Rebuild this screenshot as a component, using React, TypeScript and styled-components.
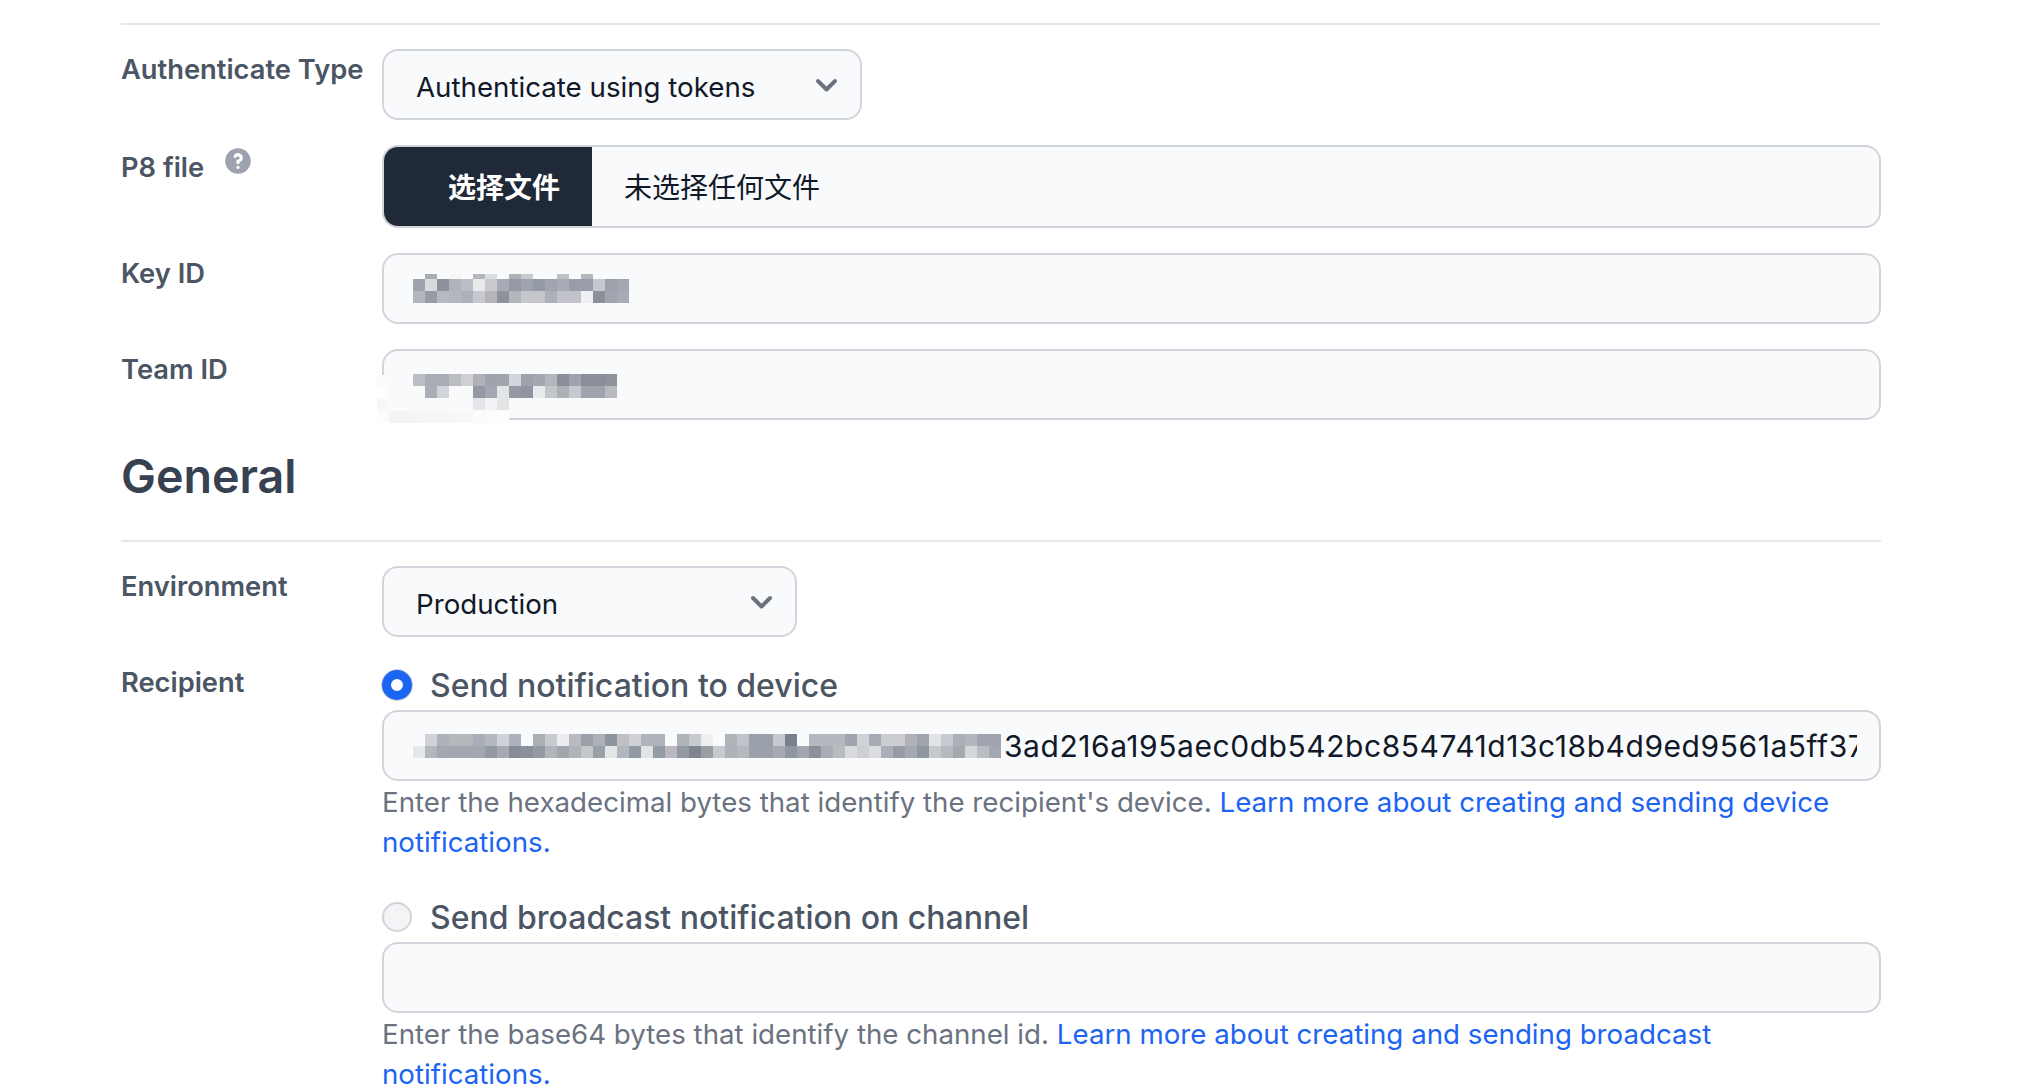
import styled, { createGlobalStyle } from "styled-components";

const GlobalStyle = createGlobalStyle`
  html, body {
    margin: 0;
    background: #fff;
    overflow: hidden;
  }
  body {
    font-family: Inter, "Noto Sans CJK SC", sans-serif;
  }
`;

const KEY_ID = [
  "- a9abb5 - f5f5f6 fbfbfc b5b7bf dcdde0 - adb1b8 c9cacf - - bfc0c7 - b5b7bf - - -",
  "a0a3ad d8dadd 8b929b b1b3bc bcbec5 e9eaec c9cacf a8abb5 959aa4 9ea3ad 959ba5 a2a5af a8abb5 9a9da9 9a9da9 c7c8cd 9ea1ac a4a6b0",
  "b4b6bd 969ca6 b7b9be b4b6bd aeb0ba c8c9ce b4b6bc 8d939d b3b6bd c6c7cc c6c7cc adb0ba c2c3ca c2c3ca eeeff1 8a909a a2a5af a8abb5",
];

const TEAM_ID = [
  "bdbec3 a9abb5 a9abb5 bcbdc2 cfd0d4 b0b2b8 9fa3ad a0a5ad d4d5da 9ca1aa a4a7af b3b6bb 8a8e99 a0a3ad 8a8e98 8a8e98 8f939c",
  "- aaacb6 d3d4d9 - - 9599a3 a3a6b0 e3e4e6 9599a3 8f95a0 e9eaec c4c6cb aeb0b8 c8c9ce a0a3ad a0a3ad b8bac0",
  "- - - - - e6e6ea f3f3f5 e3e4e6",
];

const DEVICE = [
  "- d2d3d8 adb1ba b4b7bc b4b7bc a8adb7 b4b8bd d2d3d8 adb1bb - abaeb5 c9cacf ecedef b8bac0 9aa0aa aeb0b6 8e959e bec0c5 d0d1d6 b0b3b9 aeb2bb - b0b3b9 c9cacf eeeff1 - b0b4ba c2c3c8 9aa0aa 9aa0aa c8c9ce 7b818c - b4b7bd b4b7bd b4b7bd a1a4ae d2d3d8 a8abb5 cbcdd1 cbcdd1 b0b2b8 a1a4ae e3e4e7 c8cad0 abafb8 b5b6bc a1a4ae a1a4ae",
  "e6e7e9 b4b6bd a4a7b0 a2a6ae a2a6ae a2a7b0 939aa3 a7aab3 868d98 8a919b 949aa3 b2b4bb a2a6ac b0b3b9 c6c7cb 98a0a8 e4e5e6 b2b6bf 929aa3 e2e3e7 949ca5 b8b9be 929aa2 7e858f 979ea6 c9cacd aeb1b9 b6b7bc 9aa1ab 9aa1ab a4a9b2 8f97a1 a2a6b0 8a919c a8acb4 b8bcc0 d9dadd cdcfd3 dcdde0 abaeb8 959ca6 a5a9b2 8f97a1 c6c8cc b6b9bf a4a9b0 d5d6da bcbdc2 a5a8b2",
];

// white smudge that runs over the bottom left corner of the Team ID field
const TEAM_SMUDGE = [
  "fbfbfc",
  "fefefe",
  "f7f7f8",
  "fcfcfc f4f4f6 f4f4f6 f5f5f6 f6f6f7 f6f6f7 f7f7f8 f8f8f9 fbfbfc fdfdfd fdfdfd",
];

const Page = styled.div`
  width: 1760px;
  height: 1092px;
  margin-left: 121px;
  padding-top: 23px;
  box-sizing: border-box;
  overflow: hidden;
`;

const Divider = styled.hr`
  margin: 0 0 24px;
  border: 0;
  height: 2px;
  background: #e5e7eb;
`;

const SectionTitle = styled.h2`
  margin: -4px 0 29px;
  font-size: 46.6px;
  line-height: 70px;
  font-weight: 600;
  color: #374151;
`;

const FormRow = styled.div`
  display: grid;
  grid-template-columns: 261px 1fr;
  margin-bottom: 25px;
`;

const FieldLabel = styled.label<{ $top?: number }>`
  display: flex;
  align-items: flex-start;
  padding-top: ${({ $top }) => $top ?? 2}px;
  font-size: 27.3px;
  line-height: 38px;
  font-weight: 600;
  color: #4b5563;
`;

const HelpIcon = styled.svg`
  width: 32px;
  height: 32px;
  margin: -4px 0 0 18px;
  fill: #9ca3af;
`;

const Control = styled.div`
  min-width: 0;
`;

const SelectBox = styled.div<{ $width: number }>`
  display: flex;
  align-items: center;
  justify-content: space-between;
  box-sizing: border-box;
  width: ${({ $width }) => $width}px;
  height: 71px;
  padding: 0 21px 0 32px;
  border: 2px solid #d1d5db;
  border-radius: 16px;
  background: #f9fafb;
`;

const SelectValue = styled.span`
  padding-top: 4px;
  font-size: 27.7px;
  color: #111827;
`;

const Chevron = styled.svg`
  width: 25px;
  height: 17px;
  margin-top: 1px;
  fill: none;
  stroke: #6b7280;
  stroke-width: 4;
  stroke-linecap: round;
  stroke-linejoin: round;
`;

const FileBox = styled.div`
  display: flex;
  align-items: stretch;
  box-sizing: border-box;
  height: 83px;
  border: 2px solid #d1d5db;
  border-radius: 16px;
  background: #f9fafb;
  overflow: hidden;
`;

const FileButton = styled.div`
  display: flex;
  align-items: center;
  box-sizing: border-box;
  width: 208px;
  padding: 0 0 1px 64px;
  background: #1f2937;
  color: #fff;
  font-size: 28px;
  font-weight: 600;
`;

const FileName = styled.div`
  display: flex;
  align-items: center;
  padding: 0 0 1px 32px;
  font-size: 28px;
  color: #111827;
`;

const InputBox = styled.div`
  position: relative;
  display: flex;
  align-items: center;
  box-sizing: border-box;
  height: 71px;
  padding: 0 22px 0 29px;
  border: 2px solid #d1d5db;
  border-radius: 16px;
  background: #f9fafb;
`;

const InputClip = styled.div`
  display: flex;
  align-items: center;
  flex: 1;
  min-width: 0;
  overflow: hidden;
  white-space: nowrap;
  font-size: 30px;
  letter-spacing: 0.55px;
  color: #111827;
`;

const MosaicArt = styled.svg<{ $shift?: number }>`
  display: block;
  flex-shrink: 0;
  margin-top: ${({ $shift }) => $shift ?? 0}px;
  shape-rendering: crispEdges;
`;

const DeviceMosaic = styled(MosaicArt)`
  margin-right: 3px;
`;

const Smudge = styled(MosaicArt)`
  position: absolute;
  left: -7px;
  top: 24px;
`;

const RadioRow = styled.div<{ $first?: boolean }>`
  display: flex;
  align-items: center;
  gap: 18px;
  height: 30px;
  margin: ${({ $first }) => ($first ? "8px 0 10px" : "40px 0 10px")};
`;

const RadioDot = styled.span<{ $checked?: boolean }>`
  flex-shrink: 0;
  box-sizing: border-box;
  width: 30px;
  height: 30px;
  border-radius: 50%;
  ${({ $checked }) =>
    $checked
      ? "border: 9px solid #1c64f2; background: #fff; box-shadow: 0 0 0 1px #d1d5db;"
      : "border: 2px solid #d1d5db; background: #f3f4f6;"}
`;

const RadioText = styled.span`
  font-size: 32px;
  font-weight: 500;
  color: #4b5563;
`;

const Hint = styled.p`
  margin: 0;
  padding-top: 1px;
  font-size: 27.7px;
  line-height: 40px;
  color: #6b7280;
`;

const HintLink = styled.a`
  color: #1c64f2;
  text-decoration: none;
`;

function Mosaic({ rows, shift, as: Art = MosaicArt }: { rows: string[]; shift?: number; as?: typeof MosaicArt }) {
  const cols = Math.max(...rows.map((r) => r.split(" ").length));
  return (
    <Art $shift={shift} width={cols * 12} height={rows.length * 12} viewBox={`0 0 ${cols * 12} ${rows.length * 12}`}>
      {rows.map((row, y) =>
        row.split(" ").map((c, x) =>
          c === "-" ? null : <rect key={`${x}-${y}`} x={x * 12} y={y * 12} width={12} height={12} fill={`#${c}`} />
        )
      )}
    </Art>
  );
}

function SelectField({ value, width }: { value: string; width: number }) {
  return (
    <SelectBox $width={width}>
      <SelectValue>{value}</SelectValue>
      <Chevron viewBox="0 0 25 17">
        <path d="M4 4l8.5 8.5L21 4" />
      </Chevron>
    </SelectBox>
  );
}

export default function App() {
  return (
    <>
      <GlobalStyle />
      <Page>
        <Divider />
        <FormRow>
          <FieldLabel>Authenticate Type</FieldLabel>
          <Control>
            <SelectField value="Authenticate using tokens" width={480} />
          </Control>
        </FormRow>
        <FormRow>
          <FieldLabel $top={4}>
            P8 file
            <HelpIcon viewBox="0 0 20 20">
              <path
                fillRule="evenodd"
                clipRule="evenodd"
                d="M18 10a8 8 0 11-16 0 8 8 0 0116 0zm-8-3a1 1 0 00-.867.5 1 1 0 11-1.731-1A3 3 0 0113 8a3.001 3.001 0 01-2 2.83V11a1 1 0 11-2 0v-1a1 1 0 011-1 1 1 0 100-2zm0 8a1 1 0 100-2 1 1 0 000 2z"
              />
            </HelpIcon>
          </FieldLabel>
          <Control>
            <FileBox>
              <FileButton>选择文件</FileButton>
              <FileName>未选择任何文件</FileName>
            </FileBox>
          </Control>
        </FormRow>
        <FormRow>
          <FieldLabel>Key ID</FieldLabel>
          <Control>
            <InputBox>
              <InputClip>
                <Mosaic rows={KEY_ID} shift={-7} />
              </InputClip>
            </InputBox>
          </Control>
        </FormRow>
        <FormRow>
          <FieldLabel>Team ID</FieldLabel>
          <Control>
            <InputBox>
              <InputClip>
                <Mosaic rows={TEAM_ID} shift={14} />
              </InputClip>
              <Mosaic rows={TEAM_SMUDGE} as={Smudge} />
            </InputBox>
          </Control>
        </FormRow>
        <SectionTitle>General</SectionTitle>
        <Divider />
        <FormRow>
          <FieldLabel>Environment</FieldLabel>
          <Control>
            <SelectField value="Production" width={415} />
          </Control>
        </FormRow>
        <FormRow>
          <FieldLabel>Recipient</FieldLabel>
          <Control>
            <RadioRow $first>
              <RadioDot $checked />
              <RadioText>Send notification to device</RadioText>
            </RadioRow>
            <InputBox>
              <InputClip>
                <Mosaic rows={DEVICE} as={DeviceMosaic} />
                3ad216a195aec0db542bc854741d13c18b4d9ed9561a5ff37a90c2e1
              </InputClip>
            </InputBox>
            <Hint>
              Enter the hexadecimal bytes that identify the recipient's device.{" "}
              <HintLink href="#">Learn more about creating and sending device notifications.</HintLink>
            </Hint>
            <RadioRow>
              <RadioDot />
              <RadioText>Send broadcast notification on channel</RadioText>
            </RadioRow>
            <InputBox />
            <Hint>
              Enter the base64 bytes that identify the channel id.{" "}
              <HintLink href="#">Learn more about creating and sending broadcast notifications.</HintLink>
            </Hint>
          </Control>
        </FormRow>
      </Page>
    </>
  );
}
